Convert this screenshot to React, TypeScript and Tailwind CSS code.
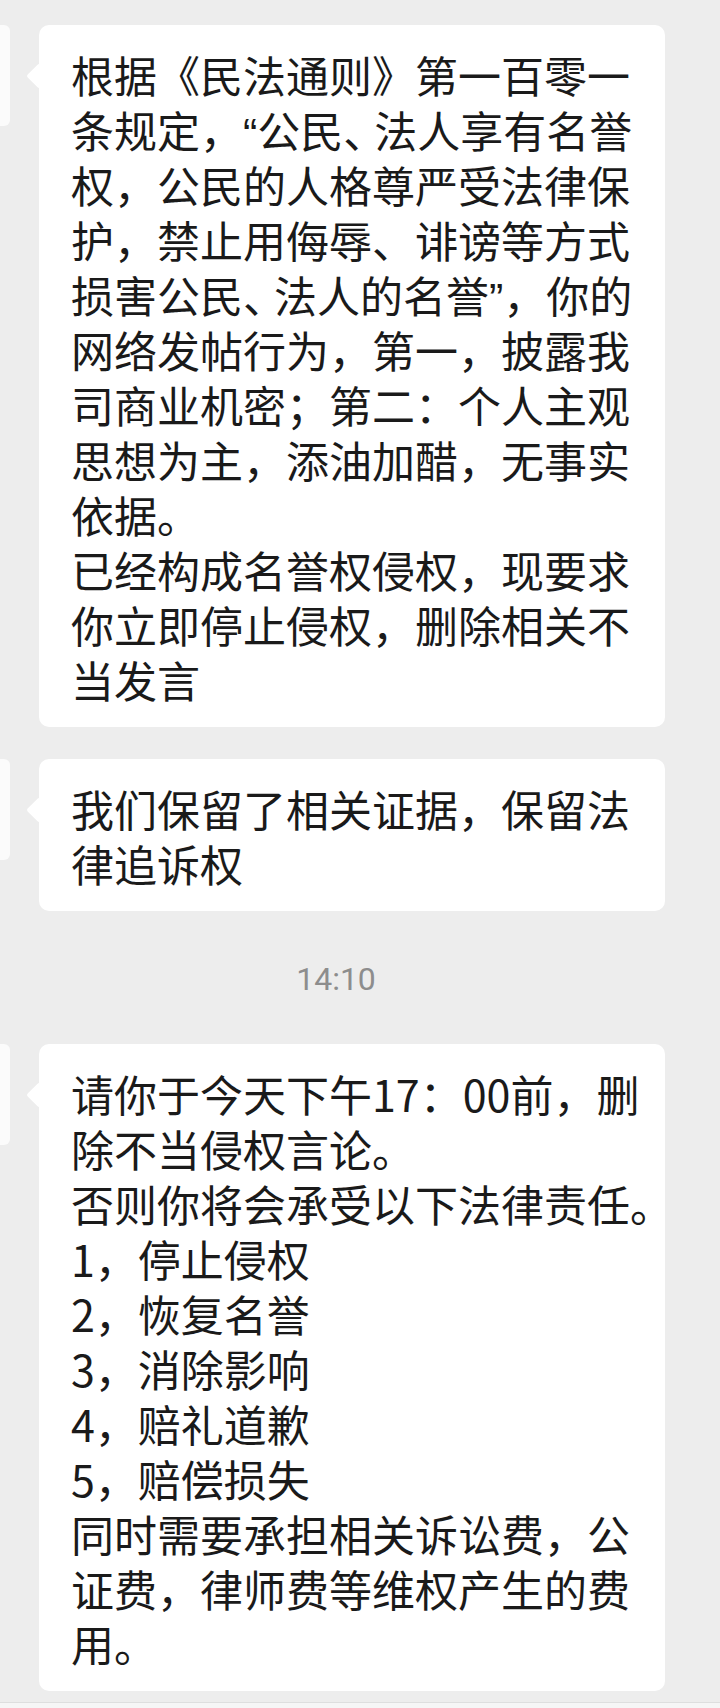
import React from "react";

const Q = ({ c }: { c: string }) => (
  <span className="leading-none" style={{ fontFamily: '"Liberation Sans", sans-serif' }}>
    {c}
  </span>
);

const C = ({ c }: { c: string }) => <span className="tracking-[-12px]">{c}</span>;

const Bubble = ({ lines }: { lines: React.ReactNode[] }) => (
  <div className="flex items-start">
    <div className="w-[10px] h-[101px] shrink-0 bg-[#fbfbfb] rounded-r-[6px]" />
    <div className="relative ml-[29px] w-[626px] bg-white rounded-[10px] pl-[32px] pr-[20px] pt-[22px] pb-[20px] text-[43px] leading-[55px] text-[#1a1a1a]">
      <div className="absolute left-[-9px] top-[42px] w-[18px] h-[18px] bg-white rotate-45 rounded-[2px]" />
      <div className="relative">
        {lines.map((l, i) => (
          <div key={i} className="h-[55px] whitespace-nowrap">
            {l}
          </div>
        ))}
      </div>
    </div>
  </div>
);

export default function App() {
  return (
    <div
      className="w-[720px] h-[1708px] bg-[#ededed] flex flex-col pt-[25px] overflow-hidden"
      style={{ fontFamily: '"Noto Sans CJK SC", "Noto Sans", sans-serif' }}
    >
      <Bubble
        lines={[
          "根据《民法通则》第一百零一",
          <>
            条规定，<Q c="“" />公民<C c="、" />法人享有名誉
          </>,
          "权，公民的人格尊严受法律保",
          "护，禁止用侮辱、诽谤等方式",
          <>
            损害公民<C c="、" />法人的名誉<Q c="”" />，你的
          </>,
          "网络发帖行为，第一，披露我",
          "司商业机密；第二：个人主观",
          "思想为主，添油加醋，无事实",
          "依据。",
          "已经构成名誉权侵权，现要求",
          "你立即停止侵权，删除相关不",
          "当发言",
        ]}
      />
      <div className="mt-[32px]">
        <Bubble lines={["我们保留了相关证据，保留法", "律追诉权"]} />
      </div>
      <div
        className="mt-[52px] h-[32px] leading-[32px] text-[32px] text-center pr-[48px] text-[#8d8d8d]"
        style={{ fontFamily: "Roboto, sans-serif" }}
      >
        14:10
      </div>
      <div className="mt-[49px]">
        <Bubble
          lines={[
            "请你于今天下午17：00前，删",
            "除不当侵权言论。",
            "否则你将会承受以下法律责任。",
            "1，停止侵权",
            "2，恢复名誉",
            "3，消除影响",
            "4，赔礼道歉",
            "5，赔偿损失",
            "同时需要承担相关诉讼费，公",
            "证费，律师费等维权产生的费",
            "用。",
          ]}
        />
      </div>
      <div className="mt-[11px] flex-1 border-t border-[#dedede] bg-[#f6f6f6]" />
    </div>
  );
}
